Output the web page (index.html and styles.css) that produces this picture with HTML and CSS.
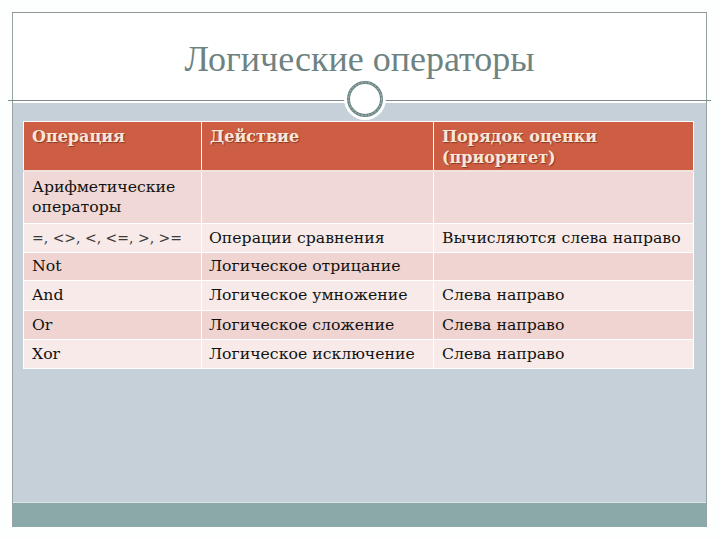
FILE: index.html
```html
<!DOCTYPE html>
<html lang="ru">
<head>
<meta charset="utf-8">
<title>Логические операторы</title>
<link rel="stylesheet" href="styles.css">
</head>
<body>
<div class="slide">
  <div class="head">
    <h1 class="title">Логические операторы</h1>
  </div>
  <div class="rule">
    <svg class="ornament" width="44" height="44" viewBox="0 0 44 44">
      <circle cx="22" cy="22" r="21" fill="#ffffff"/>
      <circle cx="22" cy="22" r="16.5" fill="none" stroke="#6f8987" stroke-width="3"/>
      <circle cx="22" cy="22" r="16.5" fill="none" stroke="#b9c9c8" stroke-width="1" stroke-dasharray="1.5 2"/>
    </svg>
  </div>
  <div class="body">
    <table class="ops">
      <colgroup>
        <col class="c1"><col class="c2"><col class="c3">
      </colgroup>
      <thead>
        <tr class="hrow">
          <th>Операция</th>
          <th>Действие</th>
          <th>Порядок оценки (приоритет)</th>
        </tr>
      </thead>
      <tbody>
        <tr class="dark r1">
          <td>Арифметические операторы</td>
          <td></td>
          <td></td>
        </tr>
        <tr class="light r2">
          <td class="sym">=, &lt;&gt;, &lt;, &lt;=, &gt;, &gt;=</td>
          <td>Операции сравнения</td>
          <td>Вычисляются слева направо</td>
        </tr>
        <tr class="dark r3">
          <td>Not</td>
          <td>Логическое отрицание</td>
          <td></td>
        </tr>
        <tr class="light r4">
          <td>And</td>
          <td>Логическое умножение</td>
          <td>Слева направо</td>
        </tr>
        <tr class="dark r5">
          <td>Or</td>
          <td>Логическое сложение</td>
          <td>Слева направо</td>
        </tr>
        <tr class="light r6">
          <td>Xor</td>
          <td>Логическое исключение</td>
          <td>Слева направо</td>
        </tr>
      </tbody>
    </table>
  </div>
  <div class="foot"></div>
</div>
</body>
</html>
```

FILE: styles.css
```css
html, body {
  margin: 0;
  padding: 0;
  background: #fdfefe;
}

.slide {
  margin: 12px 0 0 12px;
  width: 695px;
  height: 515px;
  border-left: 1px solid #97a3a2;
  border-right: 1px solid #97a3a2;
  border-top: 1px solid #8f9696;
  display: flex;
  flex-direction: column;
  box-sizing: border-box;
}

.head {
  height: 87px;
  background: #ffffff;
  display: flex;
  justify-content: center;
  align-items: flex-start;
}

.title {
  margin: 26px 0 0 0;
  font-family: "Liberation Serif", "Times New Roman", serif;
  font-weight: normal;
  font-size: 36px;
  line-height: 40px;
  color: #6e8381;
}

.rule {
  position: relative;
  height: 1px;
  background: #7f8a8a;
  margin: 0 -5px;
}

.ornament {
  position: absolute;
  left: 335px;
  top: -23px;
}

.body {
  flex: 1;
  background: #c5d0d9;
  border-top: 2px solid #ffffff;
  padding: 18px 0 0 10px;
}

.foot {
  height: 24px;
  background: #8aa9a8;
  border-top: 1px solid #dbe6e6;
}

.ops {
  border-collapse: collapse;
  width: 670px;
  table-layout: fixed;
  font-family: "DejaVu Serif", "Liberation Serif", serif;
  font-size: 15.7px;
  color: #121212;
  border: 1px solid #f3e6e4;
}

.c1 { width: 178px; }
.c2 { width: 232px; }
.c3 { width: 260px; }

.ops th, .ops td {
  border: 1px solid #ffffff;
  text-align: left;
  padding: 0 6px 0 8px;
  line-height: 20px;
}

.ops td {
  vertical-align: middle;
}

.hrow th {
  background: #cd5e43;
  color: #f7e7da;
  font-weight: bold;
  font-size: 16px;
  vertical-align: top;
  padding-top: 4px;
  height: 44px;
  line-height: 21px;
  text-shadow: 1px 1px 1px rgba(90, 30, 15, 0.55);
  border-bottom: 2px solid #f3e3e0;
}

.ops td:nth-child(2) { padding-left: 7px; }

.dark td { background: #efd4d1; }
.light td { background: #f7eae8; }
.r1 td { background: #efd8d5; }

.r1 { height: 52px; }
.r2 { height: 29px; }
.r3 { height: 28px; }
.r4 { height: 30px; }
.r5 { height: 29px; }
.r6 { height: 29px; }

.ops td.sym {
  font-size: 14px;
  color: #3a3a3a;
  white-space: nowrap;
}
```
